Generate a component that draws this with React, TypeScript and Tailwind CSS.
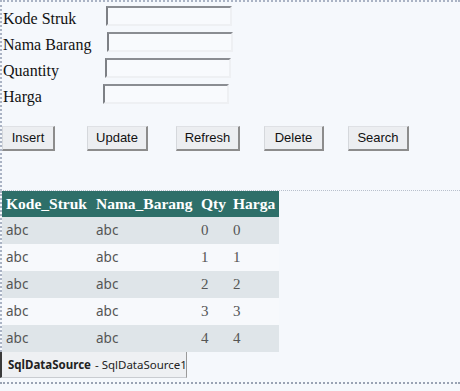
const FIELDS = ["Kode Struk", "Nama Barang", "Quantity", "Harga"];
const INPUT_OFFSETS = ["ml-[3px]", "ml-[4px]", "ml-[2px]", "ml-0"];

const BUTTONS: { label: string; width: string; gap: string }[] = [
  { label: "Insert", width: "w-[53px]", gap: "ml-0" },
  { label: "Update", width: "w-[61px]", gap: "ml-[32px]" },
  { label: "Refresh", width: "w-[64px]", gap: "ml-[28px]" },
  { label: "Delete", width: "w-[60px]", gap: "ml-[24px]" },
  { label: "Search", width: "w-[61px]", gap: "ml-[24px]" },
];

const ROWS = [0, 1, 2, 3, 4];

function TextBox({ offset }: { offset: string }) {
  return (
    <div
      className={`${offset} w-[126px] h-[20px] bg-[#f8fafd] border-2 border-t-[#8a8d92] border-l-[#7d8085] border-r-[#eef0f3] border-b-[#eef0f3]`}
    />
  );
}

function DesignButton({ label, width, gap }: { label: string; width: string; gap: string }) {
  return (
    <div
      className={`${gap} ${width} h-[25px] flex items-center justify-center bg-[#eceef1] border border-t-[#dfe1e5] border-l-[#d5d8dc] border-r-2 border-b-2 border-r-[#8c8c8c] border-b-[#8c8c8c] text-[13px] text-[#111]`}
      style={{ fontFamily: "'Liberation Sans', Arial, sans-serif" }}
    >
      {label}
    </div>
  );
}

export default function App() {
  const serif = { fontFamily: "'Liberation Serif', 'Times New Roman', serif" };
  const sans = { fontFamily: "'Noto Sans', 'Open Sans', sans-serif" };

  return (
    <div className="w-[460px] h-[391px] bg-[#f5f8fc] overflow-hidden flex flex-col">
      {/* form + buttons */}
      <div className="h-[191px] border-l-2 border-t-2 border-dotted border-[#aab3c4] border-b border-b-[#b8c0cc] flex flex-col">
        <div className="flex flex-col pt-[1px]">
          {FIELDS.map((f, i) => (
            <div key={f} className="h-[26px] flex items-center">
              <span className="w-[101px] pl-[1px] text-[16px] leading-none text-[#111] pt-[6px]" style={serif}>
                {f}
              </span>
              <TextBox offset={INPUT_OFFSETS[i]} />
            </div>
          ))}
        </div>

        <div className="flex items-start mt-[19px]">
          {BUTTONS.map((b) => (
            <DesignButton key={b.label} {...b} />
          ))}
        </div>
      </div>

      {/* grid view */}
      <div className="border-l-2 border-dotted border-[#aab3c4] flex flex-col h-[161px]">
        <div className="w-[277px] flex flex-col">
          <div className="h-[26px] flex items-center bg-[#2e6f69] text-white font-bold text-[15.5px]" style={serif}>
            <span className="w-[90px] pl-[4px]">Kode_Struk</span>
            <span className="w-[105px] pl-[4px]">Nama_Barang</span>
            <span className="w-[32px] pl-[4px]">Qty</span>
            <span className="w-[50px] pl-[4px]">Harga</span>
          </div>
          {ROWS.map((n) => (
            <div
              key={n}
              className={`h-[27px] flex items-center text-[#555] ${n % 2 === 0 ? "bg-[#dfe5e9]" : "bg-[#f7f9fc]"}`}
            >
              <span className="w-[90px] pl-[4px] text-[13.5px]" style={sans}>
                abc
              </span>
              <span className="w-[105px] pl-[4px] text-[13.5px]" style={sans}>
                abc
              </span>
              <span className="w-[32px] pl-[4px] text-[15px]" style={serif}>
                {n}
              </span>
              <span className="w-[50px] pl-[4px] text-[15px]" style={serif}>
                {n}
              </span>
            </div>
          ))}
        </div>
      </div>

      {/* data source tag */}
      <div className="h-[32px] border-b-2 border-dotted border-[#9aa3b3]">
        <div
          className="w-[187px] h-[26px] flex items-center pl-[6px] whitespace-nowrap bg-[#eef0f3] border-l-2 border-l-[#3a3a3a] border-r border-r-[#9a9a9a] border-b border-b-[#c9ccd1] text-[11.5px] text-[#222]"
          style={sans}
        >
          <span className="font-bold">SqlDataSource</span>
          <span className="ml-[4px]">- SqlDataSource1</span>
        </div>
      </div>
    </div>
  );
}
